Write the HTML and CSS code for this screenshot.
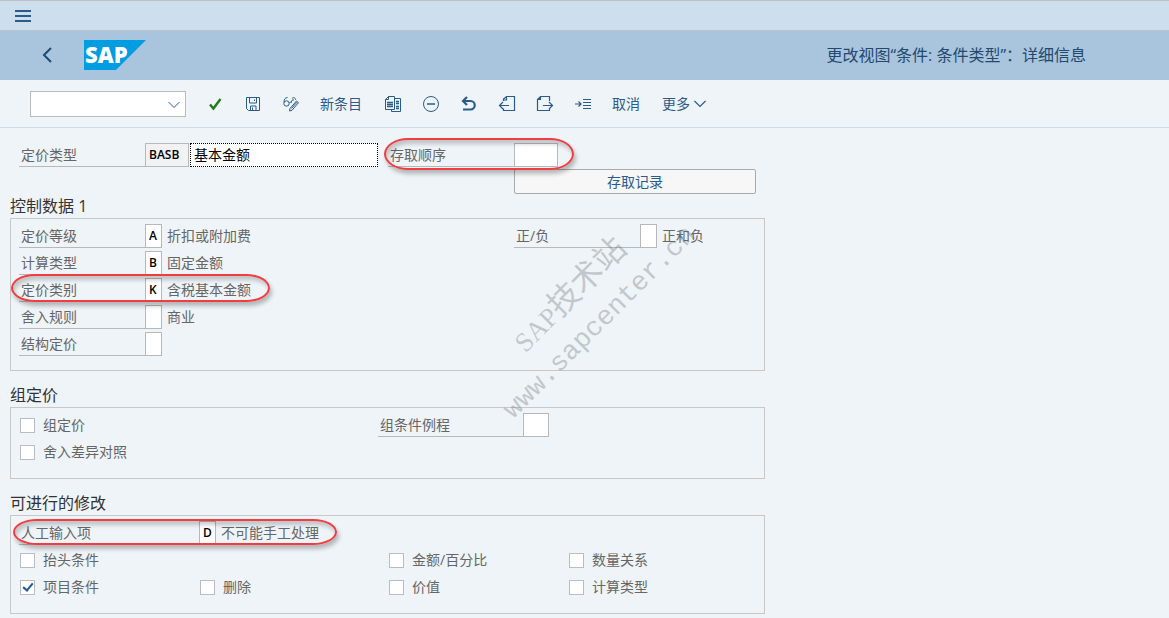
FILE: index.html
```html
<!DOCTYPE html>
<html lang="zh-CN">
<head>
    <meta charset="UTF-8">
    <meta name="viewport" content="width=device-width, initial-scale=1">
    <title>更改视图“条件: 条件类型”：详细信息</title>
    <link rel="stylesheet" href="styles.css">
</head>
<body>
    <!--菜单栏-->
    <div class="menubar">
        <button type="button" class="icon-btn" aria-label="菜单">
            <svg width="16" height="12" viewBox="0 0 16 12"><path d="M0 1h16M0 6h16M0 11h16" stroke-width="2"/></svg>
        </button>
    </div>

    <!--标题栏-->
    <header class="header">
        <button type="button" class="icon-btn back" aria-label="返回">
            <svg width="10" height="16" viewBox="0 0 10 16"><path d="M9 1L2 8l7 7" stroke-width="2"/></svg>
        </button>
        <svg class="logo" width="62" height="30" viewBox="0 0 62 30" role="img" aria-label="SAP">
            <polygon points="0,0 62,0 32,30 0,30"/>
            <text x="1" y="23">SAP</text>
        </svg>
        <h1>更改视图“条件: 条件类型”：详细信息</h1>
    </header>

    <!--工具栏-->
    <div class="toolbar">
        <div class="command">
            <select aria-label="命令"><option></option></select>
            <svg width="12" height="8" viewBox="0 0 12 8"><path d="M0.5 1L6 6.5 11.5 1"/></svg>
        </div>
        <button type="button" class="tool ok" aria-label="回车">
            <svg width="14" height="14" viewBox="0 0 14 14"><path d="M2 7.5l3.4 4L12.5 2" stroke-width="2.4"/></svg>
        </button>
        <button type="button" class="tool" aria-label="保存">
            <svg width="16" height="16" viewBox="0 0 16 16"><path d="M1.5 1.5h13v13H3.5l-2-2zM4.5 1.5v5.500h7v-5.500M5.500 14.500v-4.500h5.500v4.500M7.500 11.500v3M9.500 3.500v1.500"/></svg>
        </button>
        <button type="button" class="tool" aria-label="显示/更改">
            <svg width="18" height="18" viewBox="0 0 18 18"><circle cx="4.500" cy="8.500" r="2.700"/><path d="M2 7.500C2 4.500 3 2.500 5.500 2.500M7.200 8q1-1.300 2.300-.5M10 3.500c2-2 4 0 3.500 1.500M9.500 7.500c-.5-2 1-3 2.500-2.500M8 13.500l6.500-7.500 2 1.700L10 15.300l-2.500.7zM9.500 13.500l5.500-6.300"/></svg>
        </button>
        <button type="button" class="tool text">新条目</button>
        <button type="button" class="tool" aria-label="复制为">
            <svg width="18" height="18" viewBox="0 0 18 18"><path d="M4.500 1.500h6v13h-9v-10zM4.500 1.500v3h-3zM10.500 3.500h6v13h-9v-2" /><path d="M3 7.500h6M3 9.500h6M3 11.500h6M12 6.500h3M12 8.500h3M12 11.500h3M12 13.500h3" stroke-width="1.400"/></svg>
        </button>
        <button type="button" class="tool" aria-label="删除条目">
            <svg width="16" height="16" viewBox="0 0 16 16"><circle cx="8" cy="8" r="7.500"/><path d="M4 8h8" stroke-width="1.500"/></svg>
        </button>
        <button type="button" class="tool" aria-label="撤销">
            <svg width="16" height="16" viewBox="0 0 16 16"><path d="M6 1L2 5l4 4M2 5h7.500a4 4 0 0 1 0 8.500H2" stroke-width="2.200"/></svg>
        </button>
        <button type="button" class="tool" aria-label="上一条目">
            <svg width="18" height="18" viewBox="0 0 18 18"><path d="M5.500 6V4l3-2.500h8v14h-11v-2M8.500 1.500V5h-3M1.500 10.500H11M5 7l-3.500 3.500L5 14" stroke-width="1.200"/></svg>
        </button>
        <button type="button" class="tool" aria-label="下一条目">
            <svg width="18" height="18" viewBox="0 0 18 18"><path d="M13.500 6V1.500h-9l-3 3v11h12v-1.500M4.500 1.500v3h-3M7 10.500h9.500M13 7l3.500 3.500L13 14" stroke-width="1.200"/></svg>
        </button>
        <button type="button" class="tool" aria-label="其他条目">
            <svg width="16" height="12" viewBox="0 0 16 12"><path d="M0 6h5.500M3.500 3.500L6 6 3.500 8.500M8 1.500h8M8 4.500h8M8 7.500h8M8 10.500h8" stroke-width="1.200"/></svg>
        </button>
        <button type="button" class="tool text">取消</button>
        <button type="button" class="tool text">更多
            <svg width="12" height="8" viewBox="0 0 12 8"><path d="M0.5 1L6 6.500 11.500 1" stroke-width="1.200"/></svg>
        </button>
    </div>

    <main class="content">
        <!--抬头字段-->
        <div class="head">
            <div class="field">
                <label for="kschl">定价类型</label>
                <input id="kschl" class="w4" type="text" value="BASB" readonly>
                <input class="name" type="text" value="基本金额" aria-label="定价类型名称">
            </div>
            <div class="field marked seq">
                <label for="kozgf">存取顺序</label>
                <input id="kozgf" class="w4" type="text">
            </div>
            <button type="button" class="record">存取记录</button>
        </div>

        <section>
            <h2>控制数据 1</h2>
            <div class="box control">
                <div class="field">
                    <label for="krech1">定价等级</label>
                    <input id="krech1" type="text" value="A">
                    <span>折扣或附加费</span>
                </div>
                <div class="field">
                    <label for="knega">正/负</label>
                    <input id="knega" type="text">
                    <span>正和负</span>
                </div>
                <div class="field left">
                    <label for="krech">计算类型</label>
                    <input id="krech" type="text" value="B">
                    <span>固定金额</span>
                </div>
                <div class="field left marked category">
                    <label for="koaid">定价类别</label>
                    <input id="koaid" type="text" value="K">
                    <span>含税基本金额</span>
                </div>
                <div class="field left">
                    <label for="krnd">舍入规则</label>
                    <input id="krnd" type="text">
                    <span>商业</span>
                </div>
                <div class="field left">
                    <label for="stru">结构定价</label>
                    <input id="stru" type="text">
                </div>
            </div>
        </section>

        <section>
            <h2>组定价</h2>
            <div class="box group">
                <label class="check"><input type="checkbox">组定价</label>
                <div class="field wide">
                    <label for="grp">组条件例程</label>
                    <input id="grp" class="w2" type="text">
                </div>
                <label class="check"><input type="checkbox">舍入差异对照</label>
            </div>
        </section>

        <section>
            <h2>可进行的修改</h2>
            <div class="box change">
                <div class="field manual">
                    <div class="field marked entry">
                        <label for="kmanu">人工输入项</label>
                        <input id="kmanu" type="text" value="D">
                        <span>不可能手工处理</span>
                    </div>
                </div>
                <label class="check first"><input type="checkbox">抬头条件</label>
                <label class="check third"><input type="checkbox">金额/百分比</label>
                <label class="check"><input type="checkbox">数量关系</label>
                <label class="check"><input type="checkbox" checked>项目条件</label>
                <label class="check"><input type="checkbox">删除</label>
                <label class="check"><input type="checkbox">价值</label>
                <label class="check"><input type="checkbox">计算类型</label>
            </div>
        </section>

        <!--水印-->
        <div class="watermark">
            <div class="site">SAP<span>技术站</span></div>
            <div>www.sapcenter.cn</div>
        </div>
    </main>
</body>
</html>
```

FILE: styles.css
```css
*, *::before, *::after{
    box-sizing: border-box;
}

body{
    margin: 0;
    background-color: #eff4f8;
    color: #666;
    font: 14px/24px "Open Sans", "Noto Sans CJK SC", sans-serif;
}

button, input, select{
    margin: 0;
    padding: 0;
    font: inherit;
}

button{
    border: 0;
    background: none;
    color: #2b5b88;
    cursor: pointer;
}

svg{
    display: block;
    fill: none;
    stroke: #2b5b88;
}

/*菜单栏*/
.menubar{
    display: flex;
    align-items: center;
    height: 31px;
    padding-left: 15px;
    border-top: 1px solid #c0c0c0;
    border-bottom: 1px solid #b8c4cf;
    background-color: #cddeed;
}

/*标题栏*/
.header{
    display: flex;
    align-items: center;
    height: 49px;
    padding: 0 83px 1px 42px;
    background-color: #a9c4dd;
}

.back{
    margin-right: 32px;
}

.back svg{
    stroke: #1f4a73;
}

.logo{
    overflow: visible;
    stroke: none;
}

.logo polygon{
    fill: #009de0;
}

.logo text{
    fill: #fff;
    font: 800 22px "Open Sans", sans-serif;
}

.header h1{
    margin: 0 0 0 auto;
    color: #24496e;
    font-size: 16px;
    font-weight: 400;
}

/*工具栏*/
.toolbar{
    display: flex;
    align-items: center;
    height: 48px;
    padding-left: 30px;
    border-bottom: 1px solid #cddceb;
}

.command{
    position: relative;
    margin-right: 10px;
}

.command select{
    display: block;
    width: 156px;
    height: 26px;
    border: 1px solid #bbb;
    border-radius: 0;
    background-color: #fff;
    appearance: none;
}

/*下拉箭头盖在选择框上面*/
.command svg{
    position: absolute;
    right: 6px;
    top: 10px;
    pointer-events: none;
}

.tool{
    display: flex;
    align-items: center;
    justify-content: center;
    gap: 4px;
    min-width: 38px;
    height: 28px;
}

.tool.text{
    padding: 0 12px 0 10px;
}

.ok svg{
    stroke: #1e7b1e;
}

/*内容区*/
.content{
    position: relative;
    max-width: 775px;
    padding: 15px 10px 4px;
}

.head{
    display: grid;
    grid-template-columns: 369px 126px 1fr;
    row-gap: 2px;
    padding: 0 9px;
}

.seq{
    grid-column: 2 / 4;
}

.record{
    grid-column: 3;
    height: 25px;
    border: 1px solid #aaa;
    border-radius: 2px;
    background-color: #f7f7f7;
    line-height: 23px;
}

/*字段：标签 + 输入框 + 说明*/
.field{
    display: flex;
    height: 24px;
}

.field label{
    width: 126px;
    padding-left: 2px;
    border-bottom: 1px solid #b8b8b8;
    white-space: nowrap;
}

.field input{
    width: 17px;
    height: 24px;
    padding-left: 3px;
    border: 1px solid #b8b8b8;
    border-radius: 0;
    background-color: #fff;
    color: #000;
    font-size: 12px;
    font-weight: 600;
}

.field span{
    margin-left: 5px;
    white-space: nowrap;
}

.field .w4{
    width: 44px;
}

.field .w2{
    width: 26px;
}

.field input:read-only{
    background-color: #f2f2f2;
}

.field .name{
    width: 188px;
    margin-left: 1px;
    border: 1px dotted #000;
    font-size: 14px;
    font-weight: 400;
}

.wide label{
    width: 145px;
}

/*分组框*/
section + section{
    margin-top: 12px;
}

h2{
    margin: 0;
    color: #333;
    font-size: 16px;
    font-weight: 400;
    line-height: 24px;
}

.box{
    display: grid;
    row-gap: 3px;
    padding: 5px 8px 14px;
    border: 1px solid #c8c8c8;
}

.control{
    grid-template-columns: 495px 1fr;
}

.left{
    grid-column: 1;
}

.group{
    grid-template-columns: 359px 1fr;
}

.change{
    grid-template-columns: 180px 189px 180px 1fr;
}

.manual{
    grid-column: 1 / -1;
}

.entry label{
    width: 180px;
}

.third{
    grid-column: 3;
}

/*复选框*/
.check{
    display: flex;
    align-items: center;
    gap: 8px;
    height: 24px;
    padding-left: 1px;
}

.check input{
    display: grid;
    place-items: center;
    width: 15px;
    height: 15px;
    border: 1px solid #b9bcc4;
    background-color: #fff;
    appearance: none;
}

.check input:checked::before{
    content: "";
    width: 6px;
    height: 10px;
    margin-bottom: 3px;
    border: solid #1f5a8e;
    border-width: 0 2px 2px 0;
    transform: rotate(40deg);
}

/*红色圈注*/
.marked{
    position: relative;
}

.marked::after{
    content: "";
    position: absolute;
    top: -4px;
    left: -8px;
    width: 259px;
    height: 28px;
    border: 2px solid #f23c40;
    border-radius: 24px / 50%;
    box-shadow: 2px 4px 4px rgba(0, 0, 0, .25), inset 2px 4px 4px rgba(0, 0, 0, .2);
    pointer-events: none;
}

.seq::after{
    top: -5px;
    left: -4px;
    width: 190px;
    height: 32px;
}

.entry::after{
    top: -2px;
    left: -6px;
    width: 324px;
    height: 26px;
}

/*水印*/
.watermark{
    position: absolute;
    top: 140px;
    left: 456px;
    width: 256px;
    color: rgba(110, 115, 120, .35);
    font: 27px/40px "Liberation Mono", "Noto Sans CJK SC", monospace;
    text-align: center;
    white-space: nowrap;
    transform: rotate(-45deg);
    pointer-events: none;
}

.site{
    font-family: "Liberation Serif", "Noto Sans CJK SC", serif;
}

.watermark span{
    font-size: 32px;
}
```
